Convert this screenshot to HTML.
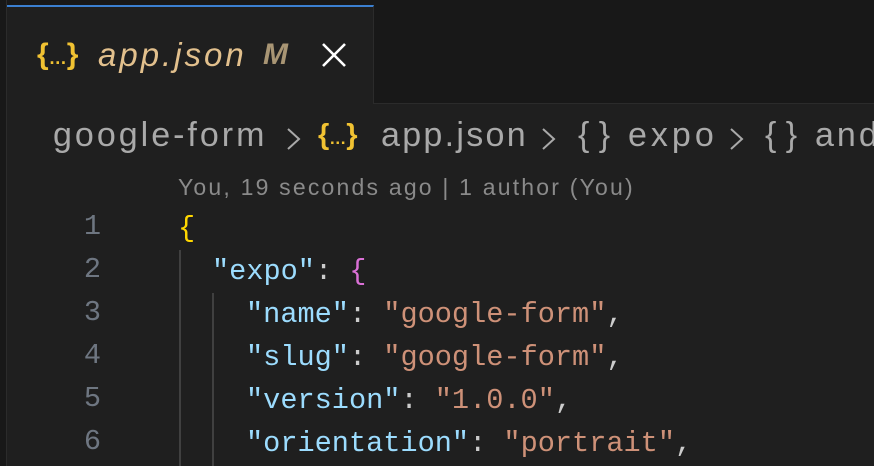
<!DOCTYPE html>
<html><head><style>
body{margin:0;width:874px;height:466px;background:#1f1f1f;overflow:hidden;position:relative;font-family:"Liberation Sans",sans-serif}
.top{position:absolute;left:0;top:0;width:874px;height:5px;background:#181818}
.tabbar{position:absolute;left:0;top:5px;width:874px;height:98px;background:#181818;border-bottom:1px solid #2b2b2b}
.tab{position:absolute;left:7px;top:5px;width:367px;height:99px;background:#1f1f1f;border-top:2px solid #3b7fd0;border-right:1px solid #2b2b2b;box-sizing:border-box}
.left{position:absolute;left:0;top:0;width:6px;height:466px;background:#181818;border-right:1px solid #2b2b2b}
.t{position:absolute;white-space:pre}
.mono{font-family:"Liberation Mono",monospace;font-size:28.6px}
.ln{position:absolute;width:101px;text-align:right;color:#6e7681;font-family:"Liberation Mono",monospace;font-size:28.6px}
.k{color:#9cdcfe}.s{color:#ce9178}.p{color:#cccccc}
.g{position:absolute;width:2px;background:#404040}
.bc{position:absolute;top:116px;font-size:34px;color:#a9a9a9;white-space:pre}
.br{color:#f1c232;font-size:29px;font-weight:bold}
</style></head><body>
<div class="top"></div>
<div class="tabbar"></div>
<div class="tab"></div>
<div class="left"></div>
<div class="t br" style="left:37px;top:38px;font-size:30px">{<span style="font-size:18px">…</span>}</div>
<div class="t" style="left:98px;top:36px;font-size:33px;letter-spacing:3px;font-style:italic;color:#e2c08d">app.json</div>
<div class="t" style="left:263px;top:38px;font-size:30px;font-style:italic;font-weight:bold;color:#a89574">M</div>
<svg class="t" style="left:321px;top:42px" width="26" height="26"><path d="M2 2L24 24M24 2L2 24" stroke="#fff" stroke-width="2.6"/></svg>
<div class="bc" style="left:53px;letter-spacing:3px">google-form</div>
<svg class="t" style="left:286px;top:127px" width="16" height="24"><path d="M2 2L13 12L2 22" stroke="#a9a9a9" stroke-width="2" fill="none"/></svg>
<div class="bc br" style="left:318px;top:119px">{<span style="font-size:17px">…</span>}</div>
<div class="bc" style="left:381px;letter-spacing:2.3px">app.json</div>
<svg class="t" style="left:541px;top:127px" width="16" height="24"><path d="M2 2L13 12L2 22" stroke="#a9a9a9" stroke-width="2" fill="none"/></svg>
<div class="bc" style="left:578px">{ }</div>
<div class="bc" style="left:628px;letter-spacing:4px">expo</div>
<svg class="t" style="left:729px;top:127px" width="16" height="24"><path d="M2 2L13 12L2 22" stroke="#a9a9a9" stroke-width="2" fill="none"/></svg>
<div class="bc" style="left:765px">{ }</div>
<div class="bc" style="left:815px;width:59px;overflow:hidden;letter-spacing:3px">and</div>
<div class="t" style="left:178px;top:174px;font-size:23px;letter-spacing:2.2px;color:#8a8a8a">You, 19 seconds ago | 1 author (You)</div>
<div class="g" style="left:179px;top:250px;height:216px"></div>
<div class="g" style="left:212px;top:293px;height:173px"></div>
<div class="ln" style="top:210px">1</div>
<div class="ln" style="top:253px">2</div>
<div class="ln" style="top:296px">3</div>
<div class="ln" style="top:339px">4</div>
<div class="ln" style="top:382px">5</div>
<div class="ln" style="top:425px">6</div>
<div class="t mono" style="left:178px;top:212px;color:#ffd700">{</div>
<div class="t mono p" style="left:212px;top:255px"><span class="k">"expo"</span>: <span style="color:#da70d6">{</span></div>
<div class="t mono p" style="left:246px;top:298px"><span class="k">"name"</span>: <span class="s">"google-form"</span>,</div>
<div class="t mono p" style="left:246px;top:341px"><span class="k">"slug"</span>: <span class="s">"google-form"</span>,</div>
<div class="t mono p" style="left:246px;top:384px"><span class="k">"version"</span>: <span class="s">"1.0.0"</span>,</div>
<div class="t mono p" style="left:246px;top:427px"><span class="k">"orientation"</span>: <span class="s">"portrait"</span>,</div>
</body></html>
